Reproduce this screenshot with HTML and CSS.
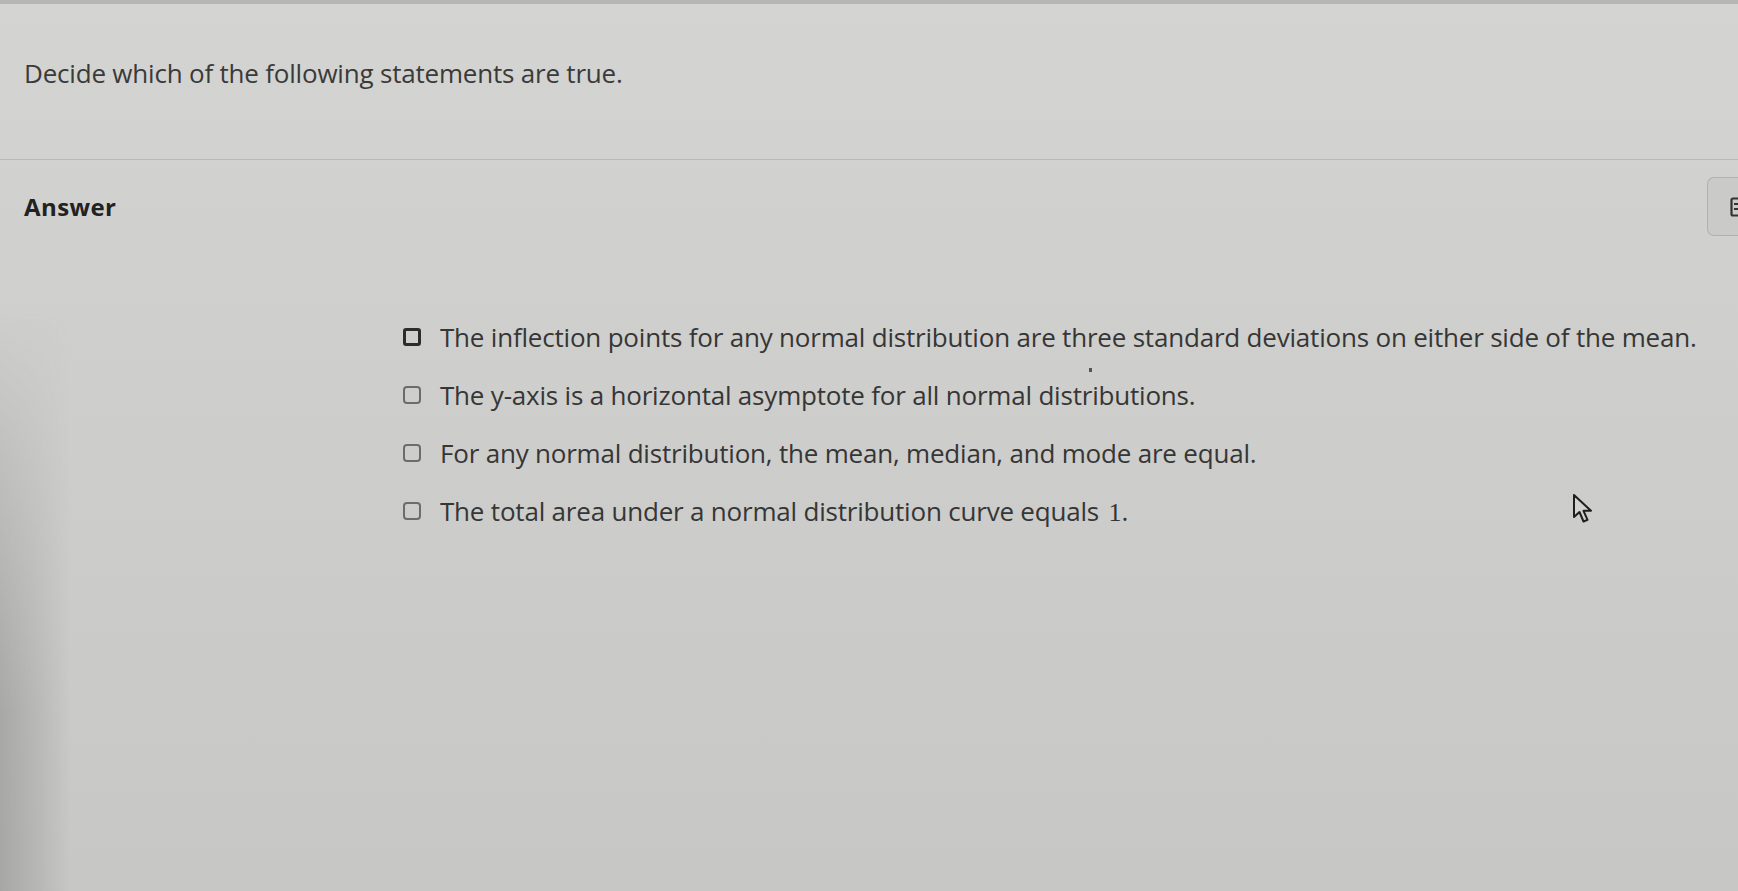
FILE: index.html
```html
<!DOCTYPE html>
<html lang="en">
<head>
<meta charset="utf-8">
<title>Question</title>
<link rel="stylesheet" href="styles.css">
</head>
<body>
<div class="screen">
  <div class="topbar"></div>
  <section class="question">
    <p class="prompt">Decide which of the following statements are true.</p>
  </section>
  <section class="answer">
    <div class="answer-head">
      <h2 class="answer-label">Answer</h2>
      <div class="side-tab">
        <svg class="tab-icon" width="14" height="20" viewBox="0 0 14 20" aria-hidden="true">
          <rect x="1.5" y="1.5" width="16" height="17" rx="1.5" fill="none" stroke="#333" stroke-width="2.2"/>
          <line x1="4" y1="7" x2="14" y2="7" stroke="#333" stroke-width="2"/>
          <line x1="4" y1="12" x2="14" y2="12" stroke="#333" stroke-width="2"/>
        </svg>
      </div>
    </div>
    <ul class="choices">
      <li class="choice"><span class="box box-focus"></span><span class="choice-text">The inflection points for any normal distribution are three standard deviations on either side of the mean.</span></li>
      <li class="choice"><span class="box"></span><span class="choice-text">The y-axis is a horizontal asymptote for all normal distributions.</span></li>
      <li class="choice"><span class="box"></span><span class="choice-text">For any normal distribution, the mean, median, and mode are equal.</span></li>
      <li class="choice"><span class="box"></span><span class="choice-text">The total area under a normal distribution curve equals <span class="num">1</span>.</span></li>
    </ul>
  </section>
  <span class="speck"></span>
  <svg class="cursor" width="26" height="32" viewBox="0 0 26 32" aria-hidden="true">
    <path d="M3 2 L3 24 L8.5 19 L12.5 28.5 L16.5 26.8 L12.5 17.8 L20 17.8 Z" fill="#d2d2d0" stroke="#1e1e1e" stroke-width="2" stroke-linejoin="round"/>
  </svg>
</div>
</body>
</html>
```

FILE: styles.css
```css
html, body {
  margin: 0;
  padding: 0;
}

body {
  width: 1738px;
  height: 891px;
  overflow: hidden;
  font-family: "Open Sans", "Noto Sans", "DejaVu Sans", sans-serif;
  color: #363636;
  background: #c9c9c7;
}

.screen {
  position: relative;
  width: 1738px;
  height: 891px;
  background: linear-gradient(180deg, #d4d4d2 0%, #cfcfcd 35%, #c7c7c5 100%);
}

.screen::before {
  content: "";
  position: absolute;
  left: 0;
  top: 0;
  width: 70px;
  height: 891px;
  background: linear-gradient(90deg, rgba(140,140,138,0.55) 0px, rgba(150,150,148,0.3) 40px, rgba(0,0,0,0) 70px);
  -webkit-mask-image: linear-gradient(180deg, rgba(0,0,0,0) 35%, rgba(0,0,0,1) 80%);
  mask-image: linear-gradient(180deg, rgba(0,0,0,0) 35%, rgba(0,0,0,1) 80%);
  pointer-events: none;
}

.topbar {
  height: 4px;
  background: #b6b6b4;
}

.question {
  height: 156px;
  display: flex;
  align-items: center;
  padding: 0 0 0 24px;
  border-bottom: 1px solid #b9b9b7;
  box-sizing: border-box;
}

.prompt {
  margin: 0;
  padding-bottom: 17px;
  font-size: 26px;
  color: #3a3a3a;
  letter-spacing: -0.2px;
}

.answer-head {
  display: flex;
  align-items: flex-start;
  justify-content: space-between;
  padding: 17px 0 0 24px;
  height: 160px;
  box-sizing: border-box;
}

.answer-label {
  margin: 13px 0 0;
  font-size: 24px;
  font-weight: 700;
  color: #222;
  letter-spacing: 0.4px;
}

.side-tab {
  width: 31px;
  height: 59px;
  box-sizing: border-box;
  border: 1px solid #b1b1af;
  border-right: none;
  border-radius: 7px 0 0 7px;
  background: #cacac8;
  display: flex;
  align-items: center;
  justify-content: flex-end;
  overflow: hidden;
}

.tab-icon {
  flex: none;
  display: block;
  margin-right: -6px;
}

.choices {
  list-style: none;
  margin: 0;
  padding: 0 0 0 403px;
  display: flex;
  flex-direction: column;
  gap: 24px;
}

.choice {
  display: flex;
  align-items: center;
  gap: 19px;
  height: 34px;
}

.box {
  flex: none;
  width: 18px;
  height: 18px;
  box-sizing: border-box;
  border: 2px solid #6c6c6a;
  border-radius: 4px;
}

.box-focus {
  border: 3px solid #2c2c2c;
  border-radius: 3px;
}

.choice-text {
  font-size: 26px;
  color: #363636;
  letter-spacing: -0.2px;
  white-space: nowrap;
}

.num {
  font-family: "Liberation Serif", serif;
  font-size: 26px;
  color: #333;
  margin-left: 3px;
}

.speck {
  position: absolute;
  left: 1089px;
  top: 368px;
  width: 3px;
  height: 4px;
  background: #555;
}

.cursor {
  position: absolute;
  left: 1571px;
  top: 493px;
}
```
